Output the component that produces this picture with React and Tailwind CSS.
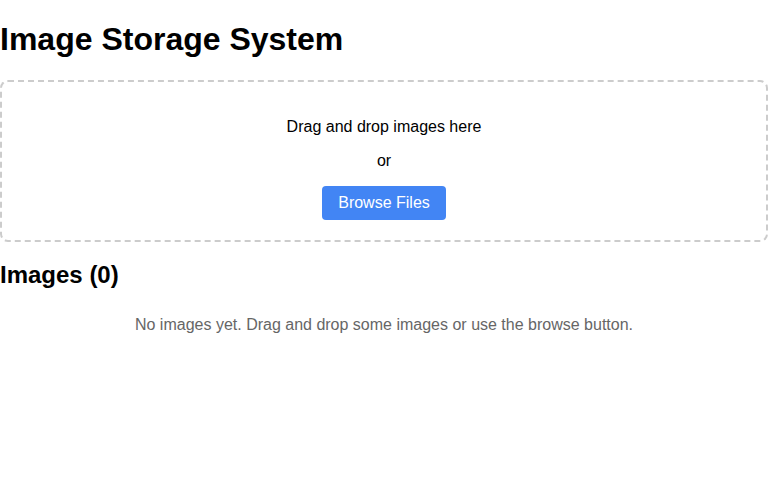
export default function App() {
  return (
    <div className="min-h-screen bg-white text-black font-['Liberation_Sans',Arial,sans-serif]">
      <h1 className="mt-[21px] mb-[22px] text-[32px] leading-[37px] font-bold">Image Storage System</h1>

      <div className="flex flex-col items-center border-2 border-dashed border-[#ccc] rounded-lg pt-[36px] pb-[20px] text-center">
        <p className="text-base leading-[18px]">Drag and drop images here</p>
        <p className="mt-4 text-base leading-[18px]">or</p>
        <button className="mt-[16px] bg-[#4285f4] text-white text-base leading-[18px] px-4 py-2 rounded">Browse Files</button>
      </div>

      <h2 className="mt-[19px] text-2xl leading-[28px] font-bold">Images (0)</h2>
      <p className="mt-[27px] text-center text-base leading-[18px] text-[#666]">
        No images yet. Drag and drop some images or use the browse button.
      </p>
    </div>
  );
}
